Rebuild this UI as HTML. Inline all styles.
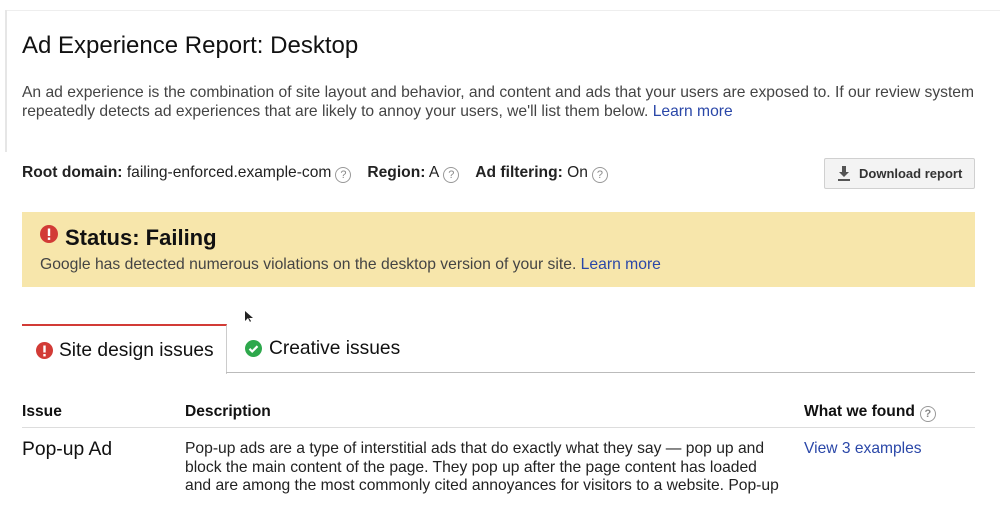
<!DOCTYPE html>
<html><head><style>
body{margin:0;width:1000px;height:532px;background:#fff;font-family:"Liberation Sans",sans-serif;position:relative;overflow:hidden;color:#222}
.a{position:absolute;white-space:nowrap}
.q{display:inline-block;width:16px;height:16px;border:1px solid #999;border-radius:50%;font-size:11px;line-height:15px;text-align:center;color:#888;vertical-align:-1px;box-sizing:border-box;margin-left:4px}
a{color:#2a47a8;text-decoration:none}
</style></head><body>
<div class="a" style="left:5px;top:10px;width:995px;height:1px;background:#eee"></div>
<div class="a" style="left:5px;top:10px;width:2px;height:142px;background:#e6e6e6"></div>
<div class="a" style="left:22px;top:32px;font-size:24px;color:#111">Ad Experience Report: Desktop</div>
<div class="a" style="left:22px;top:83px;font-size:15.65px;line-height:19px;color:#444">An ad experience is the combination of site layout and behavior, and content and ads that your users are exposed to. If our review system<br>repeatedly detects ad experiences that are likely to annoy your users, we'll list them below. <a>Learn more</a></div>
<div class="a" style="left:22px;top:164px;font-size:15.6px"><b>Root domain:</b> failing-enforced.example-com<span class="q">?</span><span style="margin-left:16px"><b>Region:</b> A<span class="q">?</span></span><span style="margin-left:16px"><b>Ad filtering:</b> On<span class="q">?</span></span></div>
<div class="a" style="left:824px;top:158px;width:151px;height:31px;box-sizing:border-box;border:1px solid #d0d0d0;border-radius:2px;background:#f3f3f3;font-size:13px;font-weight:bold;color:#333;line-height:29px;padding-left:34px">Download report
<svg style="position:absolute;left:12px;top:7px" width="14" height="15" viewBox="0 0 14 15"><path d="M5 0h4v6h3l-5 5-5-5h3z" fill="#555"/><rect x="1" y="13" width="12" height="2" fill="#555"/></svg></div>
<div class="a" style="left:22px;top:212px;width:953px;height:75px;background:#f7e6ab"></div>
<svg class="a" style="left:40px;top:225px" width="18" height="18"><circle cx="9" cy="9" r="9" fill="#d23b36"/><rect x="7.8" y="3.5" width="2.4" height="7.5" fill="#fff"/><rect x="7.8" y="12.5" width="2.4" height="2.4" fill="#fff"/></svg>
<div class="a" style="left:65px;top:225px;font-size:22px;font-weight:bold;color:#111">Status: Failing</div>
<div class="a" style="left:40px;top:256px;font-size:15.7px;color:#444">Google has detected numerous violations on the desktop version of your site. <a>Learn more</a></div>
<div class="a" style="left:22px;top:324px;width:205px;height:50px;border-top:2px solid #d23b36;border-right:1px solid #ccc;box-sizing:border-box"></div>
<div class="a" style="left:226px;top:372px;width:749px;height:1px;background:#bbb"></div>
<svg class="a" style="left:36px;top:342px" width="17" height="17"><circle cx="8.5" cy="8.5" r="8.5" fill="#d23b36"/><rect x="7.3" y="3.5" width="2.4" height="7" fill="#fff"/><rect x="7.3" y="12" width="2.4" height="2.4" fill="#fff"/></svg>
<div class="a" style="left:59px;top:340px;font-size:19.2px;color:#111">Site design issues</div>
<svg class="a" style="left:245px;top:340px" width="17" height="17"><circle cx="8.5" cy="8.5" r="8.5" fill="#2ea84c"/><path d="M4.5 8.8l2.7 2.7 5.3-5.3" stroke="#fff" stroke-width="2.2" fill="none"/></svg>
<div class="a" style="left:269px;top:338px;font-size:19.2px;color:#111">Creative issues</div>
<div class="a" style="left:22px;top:403px;font-size:15.6px;font-weight:bold;color:#111">Issue</div>
<div class="a" style="left:185px;top:403px;font-size:15.6px;font-weight:bold;color:#111">Description</div>
<div class="a" style="left:804px;top:403px;font-size:15.6px;font-weight:bold;color:#111">What we found<span class="q" style="margin-left:5px">?</span></div>
<div class="a" style="left:22px;top:427px;width:953px;height:1px;background:#ddd"></div>
<div class="a" style="left:22px;top:439px;font-size:19.3px;color:#111">Pop-up Ad</div>
<div class="a" style="left:185px;top:440px;font-size:15.65px;line-height:18.5px;color:#222">Pop-up ads are a type of interstitial ads that do exactly what they say — pop up and<br>block the main content of the page. They pop up after the page content has loaded<br>and are among the most commonly cited annoyances for visitors to a website. Pop-up</div>
<div class="a" style="left:804px;top:440px;font-size:15.6px"><a>View 3 examples</a></div>
<svg class="a" style="left:245px;top:311px" width="8" height="12"><path d="M0 0v10l3-3 2 4 1-1-2-3h4z" fill="#222"/></svg>
</body></html>
